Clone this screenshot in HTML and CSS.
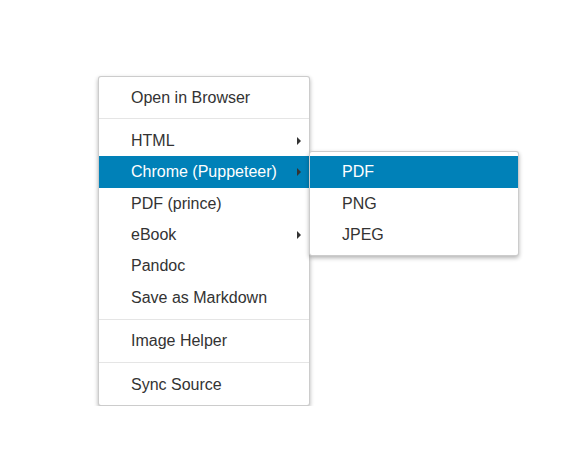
FILE: index.html
```html
<!DOCTYPE html>
<html>
<head>
<meta charset="utf-8">
<link rel="stylesheet" href="styles.css">
</head>
<body>
<div class="stage">
  <ul class="menu main">
    <li class="item">Open in Browser</li>
    <li class="sep"></li>
    <li class="item sub">HTML</li>
    <li class="item sub active">Chrome (Puppeteer)
      <ul class="menu submenu">
        <li class="item active">PDF</li>
        <li class="item">PNG</li>
        <li class="item">JPEG</li>
      </ul>
    </li>
    <li class="item">PDF (prince)</li>
    <li class="item sub">eBook</li>
    <li class="item">Pandoc</li>
    <li class="item">Save as Markdown</li>
    <li class="sep"></li>
    <li class="item">Image Helper</li>
    <li class="sep"></li>
    <li class="item">Sync Source</li>
  </ul>
</div>
</body>
</html>
```
FILE: styles.css
```css
html, body {
  margin: 0;
  padding: 0;
  background: #fff;
}
body {
  font-family: "Liberation Sans", Arial, sans-serif;
  font-size: 16px;
  color: #333;
}
.stage {
  padding: 76px 0 0 98px;
}
.menu {
  list-style: none;
  margin: 0;
  padding: 4.5px 0;
  background: #fff;
  border: 1px solid rgba(0,0,0,0.2);
  border-radius: 3px;
  box-shadow: 0 2px 4px rgba(0,0,0,0.3);
  box-sizing: border-box;
}
.main {
  width: 212px;
}
.item {
  position: relative;
  height: 31.4px;
  line-height: 31.4px;
  padding-left: 32px;
  white-space: nowrap;
}
.item.active {
  background: #0081b8;
  color: #fff;
}
.sub::after {
  content: "";
  position: absolute;
  right: 8px;
  top: 11.7px;
  border-style: solid;
  border-width: 4px 0 4px 4px;
  border-color: transparent transparent transparent #333;
}
.sep {
  height: 1px;
  margin: 5.5px 0;
  background: #e5e5e5;
}
.submenu {
  position: absolute;
  left: 210px;
  top: -5.5px;
  width: 210px;
  z-index: 2;
  color: #333;
}
.submenu .item {
  color: #333;
}
.submenu .item.active {
  color: #fff;
}
```
